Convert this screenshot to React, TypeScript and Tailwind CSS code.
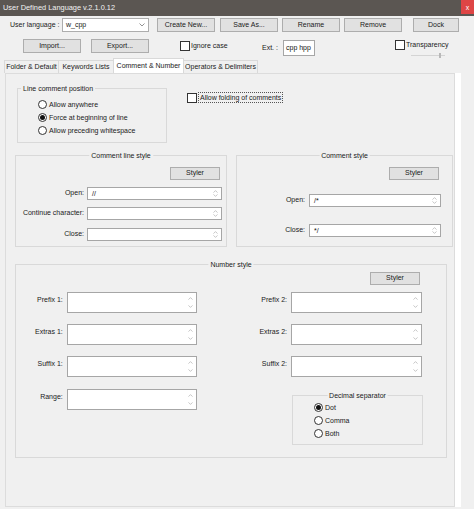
import React from "react";

function Chev({ up }: { up?: boolean }) {
  return (
    <svg width="5" height="3" viewBox="0 0 5 3" className="block">
      <path
        d={up ? "M0.5 2.6L2.5 0.6L4.5 2.6" : "M0.5 0.4L2.5 2.4L4.5 0.4"}
        fill="none"
        stroke="#b8b8b8"
        strokeWidth="0.8"
      />
    </svg>
  );
}

function Field({ value = "", className = "", tall = false }: { value?: string; className?: string; tall?: boolean }) {
  return (
    <div className={`flex bg-white border border-[#a6a6a6] ${className}`}>
      <span className="flex-1 pl-[4px] leading-[11px] text-[#111]">{value}</span>
      <div className={`flex flex-col justify-between pr-[3px] ${tall ? "py-[4px]" : "py-[2px]"}`}>
        <Chev up />
        <Chev />
      </div>
    </div>
  );
}

function Btn({ children, className = "" }: { children: React.ReactNode; className?: string }) {
  return (
    <div className={`flex items-center justify-center bg-[#e1e1e1] border border-[#adadad] ${className}`}>
      {children}
    </div>
  );
}

function Check({ label, dotted }: { label: string; dotted?: boolean }) {
  return (
    <div className="flex items-center gap-[1px]">
      <span className="w-[10px] h-[10px] border border-[#333] bg-white" />
      <span className={dotted ? "border border-dotted border-[#555] px-[1px] leading-[9px]" : "leading-[10px]"}>{label}</span>
    </div>
  );
}

function Radio({ label, checked }: { label: string; checked?: boolean }) {
  return (
    <div className="flex items-center gap-[2px] h-[13px]">
      <span className="w-[9px] h-[9px] rounded-full border border-[#333] bg-white flex items-center justify-center">
        {checked && <span className="w-[5px] h-[5px] rounded-full bg-[#111]" />}
      </span>
      <span className="leading-[9px]">{label}</span>
    </div>
  );
}

function Group({
  title,
  center,
  className = "",
  children,
}: {
  title: string;
  center?: boolean;
  className?: string;
  children?: React.ReactNode;
}) {
  return (
    <div className={`relative border border-[#d9d9d9] ${className}`}>
      <span
        className={`absolute -top-[5px] bg-[#f0f0f0] px-[2px] leading-[9px] ${
          center ? "left-1/2 -translate-x-1/2" : "left-[3px]"
        }`}
      >
        {title}
      </span>
      {children}
    </div>
  );
}

function Row({ label, labelW, gap, children, className = "" }: { label: string; labelW: string; gap: string; children: React.ReactNode; className?: string }) {
  return (
    <div className={`flex items-center ${className}`}>
      <span className={`text-right ${labelW} ${gap}`}>{label}</span>
      {children}
    </div>
  );
}

function NumRow({ label, labelW, className = "" }: { label: string; labelW: string; className?: string }) {
  return (
    <div className={`flex items-start ${className}`}>
      <span className={`text-right pt-[3px] leading-[9px] ${labelW} mr-[4px]`}>{label}</span>
      <Field tall className="w-[131px] h-[21px]" />
    </div>
  );
}

export default function App() {
  return (
    <div className="w-[474px] h-[509px] bg-[#f0f0f0] flex flex-col overflow-hidden whitespace-nowrap text-[7px] text-[#1a1a1a] font-['Liberation_Sans',Arial,sans-serif]">
      {/* title bar */}
      <div className="h-[16px] bg-[#5b5652] flex items-start justify-between">
        <span className="text-[#f2f2f2] pl-[3px] pt-[3px] leading-[10px] text-[7.4px]">User Defined Language v.2.1.0.12</span>
        <div className="w-[13px] h-[14px] bg-[#de4545] flex items-center justify-center text-white text-[7px] leading-none">x</div>
      </div>

      {/* row 1 */}
      <div className="mt-[2px] h-[14px] flex items-center pl-[10px]">
        <span className="w-[52px]">User language :</span>
        <div className="w-[87px] h-[14px] bg-white border border-[#adadad] flex items-center justify-between px-[3px]">
          <span>w_cpp</span>
          <svg width="6" height="4" viewBox="0 0 6 4">
            <path d="M0.5 0.5L3 3L5.5 0.5" fill="none" stroke="#777" strokeWidth="0.8" />
          </svg>
        </div>
        <Btn className="ml-[8px] w-[58px] h-[14px]">Create New...</Btn>
        <Btn className="ml-[5px] w-[58px] h-[14px]">Save As...</Btn>
        <Btn className="ml-[4px] w-[58px] h-[14px]">Rename</Btn>
        <Btn className="ml-[4px] w-[58px] h-[14px]">Remove</Btn>
        <Btn className="ml-[11px] w-[46px] h-[14px]">Dock</Btn>
      </div>

      {/* row 2 */}
      <div className="mt-[7px] h-[19px] flex items-start pl-[23px]">
        <Btn className="w-[58px] h-[14px]">Import...</Btn>
        <Btn className="ml-[10px] w-[58px] h-[14px]">Export...</Btn>
        <div className="ml-[31px] w-[82px] mt-[2px]">
          <Check label="Ignore case" />
        </div>
        <div className="flex items-center mt-[1px]">
          <span className="w-[21px]">Ext. :</span>
          <div className="w-[32px] h-[16px] bg-white border border-[#a6a6a6] flex items-center pl-[2px] text-[#111]">cpp hpp</div>
        </div>
        <div className="ml-[80px] mt-[1px] flex flex-col">
          <Check label="Transparency" />
          <div className="relative ml-[16px] mt-[5px] w-[34px] h-[1px] bg-[#d4d4d4]">
            <span className="absolute left-[28px] -top-[2px] w-[2px] h-[5px] bg-[#b8b8b8]" />
          </div>
        </div>
      </div>

      {/* tabs */}
      <div className="h-[15px] flex items-end pl-[4px]">
        <div className="w-[55px] h-[13px] border border-b-0 border-[#d9d9d9] flex items-center justify-center">Folder &amp; Default</div>
        <div className="-ml-px w-[56px] h-[13px] border border-b-0 border-[#d9d9d9] flex items-center justify-center">Keywords Lists</div>
        <div className="-ml-px w-[71px] h-[15px] border border-b-0 border-[#d9d9d9] bg-white flex items-center justify-center">Comment &amp; Number</div>
        <div className="-ml-px w-[75px] h-[13px] border border-b-0 border-[#d9d9d9] flex items-center justify-center">Operators &amp; Delimiters</div>
      </div>

      {/* tab page */}
      <div className="flex ml-[5px]">
        <div className="w-[450px] h-[434px] border border-[#dcdcdc] bg-[#f0f0f0] flex flex-col pl-[9px]">
          {/* line comment position */}
          <div className="mt-[14px] flex items-start">
            <Group title="Line comment position" className="ml-[2px] w-[150px] h-[55px] pl-[20px] pt-[9px]">
              <Radio label="Allow anywhere" />
              <Radio label="Force at beginning of line" checked />
              <Radio label="Allow preceding whitespace" />
            </Group>
            <div className="ml-[20px] mt-[4px]">
              <Check label="Allow folding of comments" dotted />
            </div>
          </div>

          {/* comment styles */}
          <div className="mt-[12px] flex items-start">
            <Group title="Comment line style" center className="w-[212px] h-[92px]">
              <div className="flex justify-end pr-[6px] pt-[11px]">
                <Btn className="w-[50px] h-[13px]">Styler</Btn>
              </div>
              <Row label="Open:" labelW="w-[68px]" gap="mr-[3px]" className="mt-[7px]">
                <Field value="//" className="w-[135px] h-[13px]" />
              </Row>
              <Row label="Continue character:" labelW="w-[68px]" gap="mr-[3px]" className="mt-[7px]">
                <Field className="w-[135px] h-[13px]" />
              </Row>
              <Row label="Close:" labelW="w-[68px]" gap="mr-[3px]" className="mt-[8px]">
                <Field className="w-[135px] h-[13px]" />
              </Row>
            </Group>
            <Group title="Comment style" center className="ml-[9px] w-[217px] h-[92px]">
              <div className="flex justify-end pr-[13px] pt-[11px]">
                <Btn className="w-[50px] h-[13px]">Styler</Btn>
              </div>
              <Row label="Open:" labelW="w-[68px]" gap="mr-[4px]" className="mt-[14px]">
                <Field value="/*" className="w-[132px] h-[13px]" />
              </Row>
              <Row label="Close:" labelW="w-[68px]" gap="mr-[4px]" className="mt-[17px]">
                <Field value="*/" className="w-[132px] h-[13px]" />
              </Row>
            </Group>
          </div>

          {/* number style */}
          <Group title="Number style" center className="mt-[17px] w-[432px] h-[194px]">
            <div className="flex justify-end pr-[26px] pt-[7px]">
              <Btn className="w-[50px] h-[13px]">Styler</Btn>
            </div>
            <div className="flex items-start mt-[7px]">
              <div className="flex flex-col w-[181px]">
                <NumRow label="Prefix 1:" labelW="w-[47px]" />
                <NumRow label="Extras 1:" labelW="w-[47px]" className="mt-[11px]" />
                <NumRow label="Suffix 1:" labelW="w-[47px]" className="mt-[11px]" />
                <NumRow label="Range:" labelW="w-[47px]" className="mt-[12px]" />
              </div>
              <div className="flex flex-col">
                <NumRow label="Prefix 2:" labelW="w-[90px]" />
                <NumRow label="Extras 2:" labelW="w-[90px]" className="mt-[11px]" />
                <NumRow label="Suffix 2:" labelW="w-[90px]" className="mt-[11px]" />
                <Group title="Decimal separator" center className="mt-[18px] ml-[95px] w-[131px] h-[50px] pl-[21px] pt-[5px]">
                  <Radio label="Dot" checked />
                  <Radio label="Comma" />
                  <Radio label="Both" />
                </Group>
              </div>
            </div>
          </Group>
        </div>
        <div className="w-[6px] h-[434px] bg-white" />
      </div>
    </div>
  );
}
